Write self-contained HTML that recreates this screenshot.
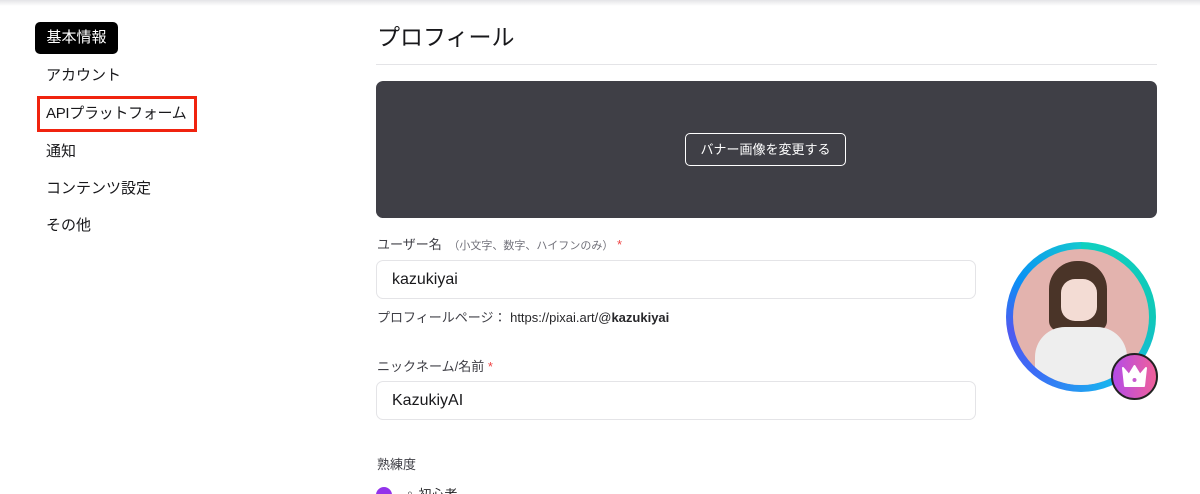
<!DOCTYPE html>
<html><head><meta charset="utf-8"><style>
*{box-sizing:border-box;margin:0;padding:0}
html,body{width:1200px;height:494px;overflow:hidden}
body{background:#fff;font-family:"Liberation Sans","Noto Sans CJK JP",sans-serif;color:#18181b;position:relative}
.top{position:absolute;left:0;top:0;width:1200px;height:6px;background:linear-gradient(#e4e4e7,#fff)}
.a{position:absolute;white-space:nowrap}
.nav{font-size:15px;left:46px}
.inp{position:absolute;left:376px;width:600px;height:39px;border:1px solid #e4e4e7;border-radius:7px;font-size:16px;padding-left:15px;line-height:37px}
.lab{font-size:13px;color:#3f3f46;left:377px}
.star{color:#ef4444}
</style></head><body>
<div class="top"></div>
<div class="a" style="left:35px;top:22px;width:83px;height:32px;background:#000;border-radius:5px;color:#fff;font-size:15px;line-height:32px;text-align:center">基本情報</div>
<div class="a nav" style="top:64px">アカウント</div>
<div class="a" style="left:37px;top:96px;width:160px;height:36px;border:3px solid #f0230f"></div>
<div class="a nav" style="top:102px;letter-spacing:-0.3px">APIプラットフォーム</div>
<div class="a nav" style="top:140px">通知</div>
<div class="a nav" style="top:177px">コンテンツ設定</div>
<div class="a nav" style="top:214px">その他</div>

<div class="a" style="left:377px;top:18px;font-size:23px">プロフィール</div>
<div class="a" style="left:376px;top:64px;width:781px;height:1px;background:#e4e4e7"></div>
<div class="a" style="left:376px;top:81px;width:781px;height:137px;background:#3f3f46;border-radius:7px"></div>
<div class="a" style="left:685px;top:133px;width:161px;height:33px;border:1px solid #fff;border-radius:5px;color:#fff;font-size:13px;line-height:31px;text-align:center">バナー画像を変更する</div>

<div class="a lab" style="top:234px">ユーザー名 <span style="font-size:11px;color:#71717a">&nbsp;（小文字、数字、ハイフンのみ）</span> <span class="star">*</span></div>
<div class="inp" style="top:260px">kazukiyai</div>
<div class="a lab" style="top:307px">プロフィールページ： <span style="color:#27272a">https://pixai.art/@<b>kazukiyai</b></span></div>
<div class="a lab" style="top:356px">ニックネーム/名前 <span class="star">*</span></div>
<div class="inp" style="top:381px">KazukiyAI</div>
<div class="a lab" style="top:454px">熟練度</div>
<div class="a" style="left:376px;top:487px;width:16px;height:16px;border-radius:50%;background:#9333ea"></div>
<div class="a" style="left:405px;top:484px;font-size:13px;color:#27272a">♀ 初心者</div>

<div class="a" style="left:1006px;top:242px;width:150px;height:150px;border-radius:50%;background:conic-gradient(from 0deg,#10d0c0,#10c8b8 90deg,#1ab0f0 160deg,#3b6cf6 220deg,#4f5af0 260deg,#0a90f5 300deg,#14c8d0 360deg)"></div>
<div class="a" style="left:1013px;top:249px;width:136px;height:136px;border-radius:50%;background:#e3b3ae;overflow:hidden">
 <div style="position:absolute;left:36px;top:12px;width:58px;height:70px;border-radius:28px 28px 10px 10px;background:#4a3428"></div>
 <div style="position:absolute;left:48px;top:30px;width:36px;height:42px;border-radius:14px;background:#f3dcd4"></div>
 <div style="position:absolute;left:22px;top:78px;width:92px;height:70px;border-radius:30px 30px 0 0;background:#eeeeee"></div>
</div>
<div class="a" style="left:1111px;top:353px;width:47px;height:47px;border-radius:50%;border:2px solid #222;background:linear-gradient(90deg,#b44be8,#f0609a)">
 <svg width="43" height="43" viewBox="0 0 43 43"><path d="M10 13 L16 20 L21.5 11 L27 20 L33 13 L31 31 L12 31 Z" fill="#fff" stroke="#fff" stroke-linejoin="round" stroke-width="2"/><circle cx="21.5" cy="25" r="2" fill="#c85ad0"/></svg>
</div>
</body></html>
